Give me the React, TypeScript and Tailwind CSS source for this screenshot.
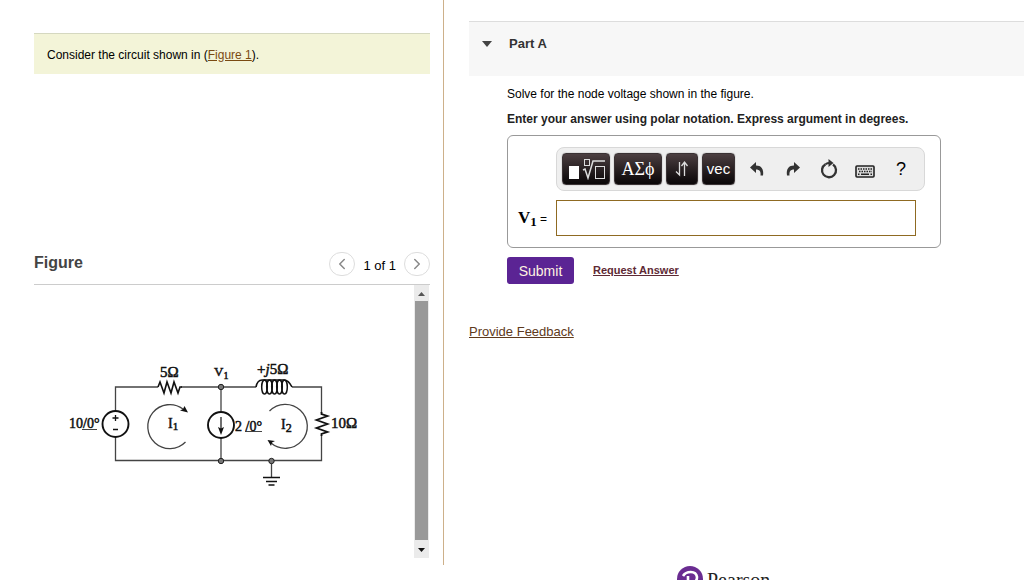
import React, { useState } from 'react';
import { ChevronLeft, ChevronRight } from 'lucide-react';

const TOOL_BUTTON =
  'flex h-8 items-center justify-center rounded-[4px] border border-[#3a3234] bg-linear-to-b from-[#4c3f41] to-[#0a0708] text-white shadow-[0_0_1px_#555]';

const ICON_BUTTON = 'flex h-8 w-9 items-center justify-center text-[#333]';

const PAGER_BUTTON =
  'flex h-6 w-[26px] items-center justify-center rounded-full border border-[#ddd] text-[#888]';

function Circuit() {
  return (
    <svg
      viewBox="60 350 310 145"
      className="mt-[65px] ml-[26px] h-[145px] w-[310px] shrink-0 font-['Liberation_Serif',serif]"
      role="img"
      aria-label="Circuit with two meshes"
      fill="none"
      stroke="#444"
    >
      {/* Wires */}
      <path d="M158 387H115.500V411M115.500 437V460.500H321.500V435M321.500 413V387H292M181 387H256M221 387V411M221 438V461M271.500 461V477" strokeWidth="1.300" />

      {/* Resistors and inductor */}
      <path d="M158 387l2-5 4 11 3-11 4 11 3-11 4 11 2-6h2" stroke="#111" strokeWidth="1.600" />
      <path d="M321.500 412v2l6 2-11 4 11 4-11 4 11 4-6 2v2" stroke="#111" strokeWidth="1.800" />
      <path d="M256 387c1-5 3-7 6-7h22c4 0 6 3 8 7" stroke="#111" strokeWidth="1.600" />
      <g stroke="#111" strokeWidth="1.500">
        <ellipse cx="264.500" cy="387" rx="2.800" ry="7" />
        <ellipse cx="269.500" cy="387" rx="2.800" ry="7" />
        <ellipse cx="274.500" cy="387" rx="2.800" ry="7" />
        <ellipse cx="279.500" cy="387" rx="2.800" ry="7" />
        <ellipse cx="284.500" cy="387" rx="2.800" ry="7" />
      </g>

      {/* Sources */}
      <circle cx="115.500" cy="424" r="13" stroke="#111" strokeWidth="1.900" />
      <path d="M112.500 418h6M115.500 415v6M113 429.500h5" stroke="#111" strokeWidth="1.300" />
      <circle cx="221" cy="425" r="13" stroke="#111" strokeWidth="1.900" />
      <path d="M221 417v12" stroke="#222" strokeWidth="1.300" />
      <path d="M218 427l3 1.500 3-1.500-3 8z" fill="#111" stroke="none" />

      {/* Mesh currents */}
      <path d="M183 409A22 22 0 1 0 185.500 442" strokeWidth="1.300" />
      <path d="M188 412.500l-8-2 3-1.500 1.500-3z" fill="#111" stroke="none" />
      <path d="M269.500 411A22 22 0 1 1 271 443" strokeWidth="1.300" />
      <path d="M267.500 440l7.500 1-3 1.500-1 3.500z" fill="#111" stroke="none" />

      {/* Ground */}
      <path d="M263 477.500h17M266 481.500h11M268.500 485h6" stroke="#111" strokeWidth="1.700" />

      <g fill="#777" stroke="#222">
        <circle cx="221" cy="387" r="2.700" />
        <circle cx="221" cy="461" r="2.700" />
        <circle cx="271.500" cy="461" r="2.700" />
      </g>

      <path d="M82 429.500H97M245 431.500H262" strokeWidth="1" />

      <g fill="#111" stroke="#111" strokeWidth="0.500" fontSize="15">
        <text x="160" y="377">5Ω</text>
        <text x="214" y="376" fontSize="13">V<tspan fontSize="10" dy="3">1</tspan></text>
        <text x="257" y="374">+<tspan fontStyle="italic">j</tspan>5Ω</text>
        <text x="69" y="428" fontSize="14">10/0°</text>
        <text x="235" y="431" fontSize="14">2 /0°</text>
        <text x="168" y="428" fontSize="14">I<tspan fontSize="11" dy="2">1</tspan></text>
        <text x="281" y="429" fontSize="14">I<tspan fontSize="12" dy="3">2</tspan></text>
        <text x="331" y="428">10Ω</text>
      </g>
    </svg>
  );
}

function FigurePanel() {
  return (
    <div className="flex min-h-0 flex-1 flex-col">
      <div className="flex h-[41px] items-start justify-between border-b border-[#ccc]">
        <h2 className="pt-[9px] text-base leading-5 font-bold text-[#444]">Figure</h2>
        <div className="flex items-center gap-2 pt-2 text-[13px]">
          <button aria-label="Previous figure" className={PAGER_BUTTON}>
            <ChevronLeft size={18} className="shrink-0" />
          </button>
          <span className="pt-1">1 of 1</span>
          <button aria-label="Next figure" className={PAGER_BUTTON}>
            <ChevronRight size={18} className="shrink-0" />
          </button>
        </div>
      </div>

      <div className="flex min-h-0 flex-1">
        <div className="min-w-0 flex-1 overflow-hidden">
          <Circuit />
        </div>
        <div className="mr-px flex w-[15px] flex-col items-center bg-[#ebebeb]">
          <svg viewBox="0 0 15 16" className="h-4 w-[15px]">
            <path d="M4 11l3.500-4 3.500 4z" fill="#555" />
          </svg>
          <div className="w-[13px] flex-1 bg-[#999]" />
          <svg viewBox="0 0 15 18" className="h-[18px] w-[15px]">
            <path d="M4 8h7l-3.500 4z" fill="#111" />
          </svg>
        </div>
      </div>
    </div>
  );
}

function Toolbar() {
  return (
    <div className="flex h-[44px] items-center rounded-lg border border-[#d8d8d8] bg-[#efefef] pl-[5px]">
      <div className="flex gap-1">
        <button aria-label="Templates" className={`${TOOL_BUTTON} w-12`}>
          <svg viewBox="0 0 38 22" className="h-[22px] w-[38px]" fill="none" stroke="#ddd">
            <rect x="2" y="8" width="10" height="13" fill="#fff" stroke="none" />
            <rect x="17.500" y="1.500" width="5" height="6" />
            <path d="M16 12l2-1 3 9 5-17h12" strokeWidth="1.500" />
            <rect x="28.500" y="8.500" width="9" height="12" />
          </svg>
        </button>
        <button aria-label="Greek symbols" className={`${TOOL_BUTTON} w-12 font-['Liberation_Serif',serif] text-lg`}>
          ΑΣϕ
        </button>
        <button aria-label="Arrows" className={`${TOOL_BUTTON} w-8`}>
          <svg viewBox="0 0 14 18" className="h-[18px] w-[14px]" fill="none" stroke="#ddd" strokeWidth="1.300">
            <path d="M4.500 2v13M1 11.500l3.500 3.500V11M9.500 16V2M6.500 6l3-4 3 4" />
          </svg>
        </button>
        <button className={`${TOOL_BUTTON} w-[33px] text-[15px]`}>vec</button>
      </div>

      <div className="flex pl-1">
        <button aria-label="Undo" className={ICON_BUTTON}>
          <svg viewBox="0 0 16 16" className="size-4" fill="currentColor">
            <path d="M1 6.500L7 1v3.500c5 0 8 3 7 10h-2.500c.500-4-1-6-4.500-6V12z" />
          </svg>
        </button>
        <button aria-label="Redo" className={ICON_BUTTON}>
          <svg viewBox="0 0 16 16" className="size-4" fill="currentColor">
            <path d="M15 6.500L9 1v3.500c-5 0-8 3-7 10h2.500c-.500-4 1-6 4.500-6V12z" />
          </svg>
        </button>
        <button aria-label="Reset" className={ICON_BUTTON}>
          <svg viewBox="0 0 18 20" className="h-5 w-[18px]" fill="none" stroke="currentColor">
            <path d="M13 5.500a7 7 0 1 1-7.500-.300" strokeWidth="2.300" />
            <path d="M5.500 5.200a7 7 0 0 1 4-1.200" strokeWidth="1.800" />
            <path d="M8.500 0l5 4-5 4z" fill="currentColor" stroke="none" />
          </svg>
        </button>
        <button aria-label="Keyboard" className={ICON_BUTTON}>
          <svg viewBox="0 0 20 13" className="mt-1 h-[13px] w-5">
            <rect x="1" y="1" width="18" height="11" rx="1" fill="#ddd" stroke="#222" strokeWidth="1.600" />
            <path d="M3 4h14M4 6.500h13" stroke="#222" strokeWidth="1.400" strokeDasharray="1.500 1" />
            <path d="M3 9.300h1.500M6 9.300h8M15.500 9.300h1.500" stroke="#222" strokeWidth="1.500" />
          </svg>
        </button>
        <button aria-label="Help" className="flex h-8 w-9 items-center justify-center text-lg text-black">?</button>
      </div>
    </div>
  );
}

export default function App() {
  const [answer, setAnswer] = useState('');

  return (
    <div className="grid h-screen grid-cols-[444fr_580fr] overflow-hidden bg-white font-['Liberation_Sans',Arial,sans-serif] text-[13px] text-black">
      {/* Problem statement and figure */}
      <section className="mb-[15px] flex min-h-0 flex-col border-r border-[#cdb08a] pt-[33px] pr-[13px] pb-[7px] pl-[34px]">
        <p className="mb-[170px] flex h-[41px] items-center border-t border-[#d5d8c0] bg-[#f3f4d8] px-[13px] pt-px text-xs">
          <span>
            Consider the circuit shown in (
            <a href="#figure" className="text-[#7a4a12] underline">Figure 1</a>).
          </span>
        </p>
        <FigurePanel />
      </section>

      {/* Question */}
      <main className="flex min-h-0 flex-col items-stretch pt-[21px] pl-[25px]">
        <header className="flex h-[55px] shrink-0 items-start border-t border-[#ddd] bg-[#f7f7f7] pt-3 pl-3">
          <button aria-expanded="true" className="flex items-center gap-4 font-bold text-[#333]">
            <svg viewBox="0 0 12 8" className="h-2 w-3">
              <path d="M1 1h10L6 7z" fill="#444" />
            </svg>
            Part A
          </button>
        </header>

        <div className="pl-[38px]">
          <p className="mt-2 text-xs leading-5">Solve for the node voltage shown in the figure.</p>
          <p className="mt-[5px] text-xs leading-5 font-bold text-[#222]">
            Enter your answer using polar notation. Express argument in degrees.
          </p>

          <form onSubmit={(e) => e.preventDefault()}>
            <div className="mt-[6px] mr-[83px] rounded-md border border-[#999] pt-[11px] pr-[15px] pb-[11px] pl-[10px]">
              <div className="pl-[38px]">
                <Toolbar />
              </div>
              <div className="mt-[9px] flex items-center pr-[9px]">
                <label htmlFor="answer" className="w-[38px] shrink-0 text-xs whitespace-nowrap">
                  <span className="font-['Liberation_Serif',serif] text-[17px] font-bold">V</span>
                  <sub className="font-['Liberation_Serif',serif] text-[13px] font-bold">1</sub> =
                </label>
                <input
                  id="answer"
                  type="text"
                  value={answer}
                  onChange={(e) => setAnswer(e.target.value)}
                  className="h-9 min-w-0 flex-1 border border-[#8f6a22] px-2 text-base outline-none"
                />
              </div>
            </div>

            <div className="mt-[9px] flex items-center gap-[19px]">
              <button type="submit" className="h-[27px] w-[67px] rounded-[3px] bg-[#5b2494] text-sm text-[#fff3e0]">
                Submit
              </button>
              <a href="#request" className="text-[11px] font-bold text-[#5e2a35] underline">Request Answer</a>
            </div>
          </form>
        </div>

        <a href="#feedback" className="mt-[38px] self-start text-[13px] leading-5 text-[#5e3a1c] underline">
          Provide Feedback
        </a>

        <footer className="mt-[224px] flex shrink-0 items-start gap-1 pl-[208px]">
          <svg viewBox="0 0 26 26" className="size-[26px] shrink-0">
            <circle cx="13" cy="13" r="13" fill="#6a2c91" />
            <path d="M6 10c3-5 13-6 14 1 0 5-4 7-8 6M11 10v12" fill="none" stroke="#fff" strokeWidth="2.600" />
          </svg>
          <span className="pt-[2px] font-['Liberation_Serif',serif] text-xl leading-6 text-[#222]">Pearson</span>
        </footer>
      </main>
    </div>
  );
}
